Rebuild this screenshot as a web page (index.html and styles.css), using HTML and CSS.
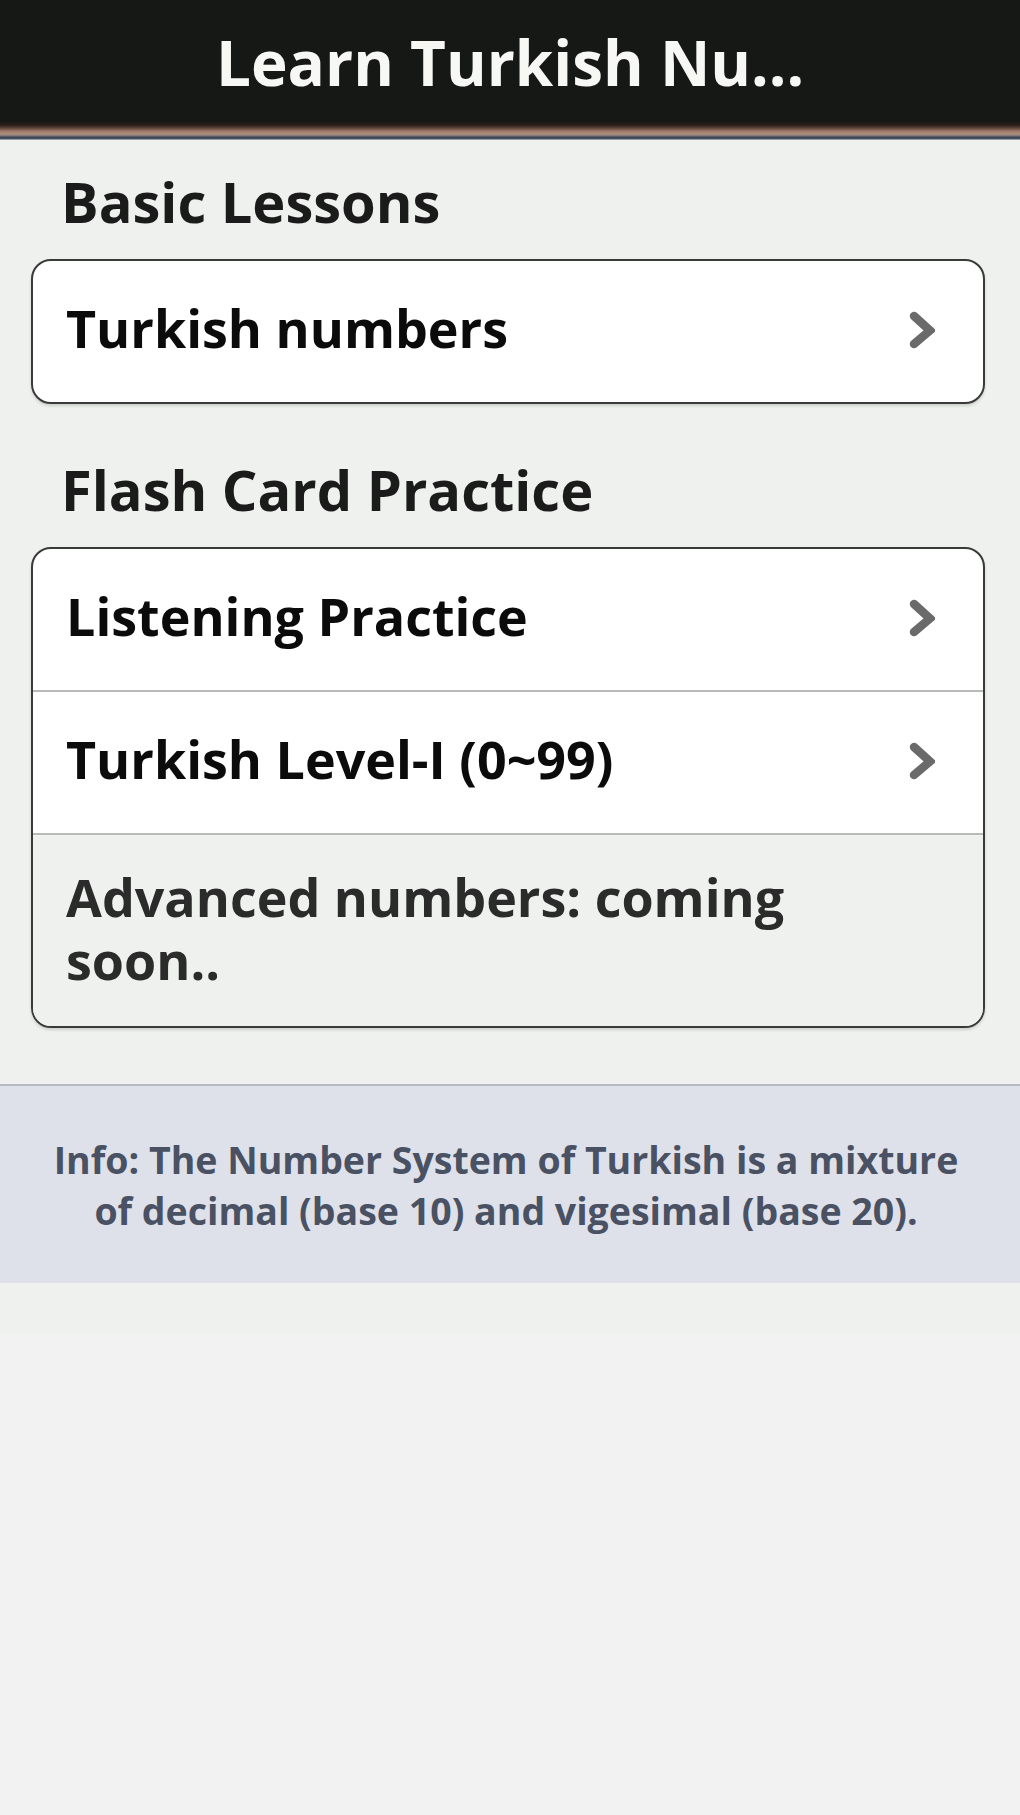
FILE: index.html
```html
<!DOCTYPE html>
<html lang="en">
<head>
<meta charset="utf-8">
<title>Learn Turkish Numbers</title>
<link rel="stylesheet" href="styles.css">
</head>
<body>
<div class="screen">
  <header class="appbar">Learn Turkish Nu...</header>
  <div class="appbar-edge"></div>

  <section class="section">
    <h2 class="section-title">Basic Lessons</h2>
    <div class="card">
      <div class="row">
        <span class="label">Turkish numbers</span>
        <svg class="chev" viewBox="0 0 26 38" width="26" height="38" aria-hidden="true"><polyline points="5,5 21,19.5 5,33"/></svg>
      </div>
    </div>
  </section>

  <section class="section">
    <h2 class="section-title">Flash Card Practice</h2>
    <div class="card">
      <div class="row">
        <span class="label">Listening Practice</span>
        <svg class="chev" viewBox="0 0 26 38" width="26" height="38" aria-hidden="true"><polyline points="5,5 21,19.5 5,33"/></svg>
      </div>
      <div class="row">
        <span class="label">Turkish Level-I (0~99)</span>
        <svg class="chev" viewBox="0 0 26 38" width="26" height="38" aria-hidden="true"><polyline points="5,5 21,19.5 5,33"/></svg>
      </div>
      <div class="row row-static">
        <span class="label">Advanced numbers: coming soon..</span>
      </div>
    </div>
  </section>

  <div class="info">Info: The Number System of Turkish is a mixture of decimal (base 10) and vigesimal (base 20).</div>
</div>
</body>
</html>
```

FILE: styles.css
```css
html, body {
  margin: 0;
  padding: 0;
}

body {
  background: #f2f2f2;
  font-family: "Open Sans", "Noto Sans", "DejaVu Sans", sans-serif;
  font-weight: 700;
}

.screen {
  background: #eef1ee;
  padding-bottom: 51px;
}

.appbar {
  height: 122px;
  background: #161816;
  color: #f7f7f4;
  font-size: 62px;
  line-height: 122px;
  padding-top: 1px;
  box-sizing: border-box;
  text-align: center;
  white-space: nowrap;
  overflow: hidden;
}

.appbar-edge {
  height: 18px;
  background: linear-gradient(to bottom,
    #1d1a17 0px,
    #2a1e19 3px,
    #5a4238 6px,
    #9c7868 9px,
    #b08e7e 12px,
    #7a7378 14px,
    #3b4352 15px,
    #4a5263 17px,
    #dfe3e3 18px);
}

.section {
  padding-top: 47px;
}

.section:first-of-type {
  padding-top: 23px;
}

.section-title {
  margin: 0 0 20px;
  padding-left: 61px;
  font-size: 56px;
  line-height: 76px;
  font-weight: 700;
  color: #1b1b1b;
}

.card {
  margin-left: 31px;
  width: 954px;
  box-sizing: border-box;
  border: 2px solid #3a3a3a;
  border-radius: 20px;
  background: #ffffff;
  overflow: hidden;
  box-shadow: 0 2px 3px rgba(0, 0, 0, 0.14);
}

.row {
  display: flex;
  align-items: center;
  height: 141px;
  box-sizing: border-box;
  padding: 31px 48px 38px 33px;
  font-size: 52px;
  line-height: 72px;
  color: #0b0b0b;
}

.row + .row {
  border-top: 2px solid #b9b9b9;
  height: 143px;
}

.label {
  flex: 1;
}

.chev {
  flex: none;
  margin-top: 4px;
}

.chev polyline {
  fill: none;
  stroke: #6a6a6a;
  stroke-width: 8.5;
  stroke-linecap: round;
  stroke-linejoin: miter;
}

.row-static {
  height: auto;
  background: #eef1ee;
  color: #2b2b2b;
  line-height: 63px;
  padding: 30px 150px 35px 33px;
}

.row + .row-static {
  height: auto;
}

.info {
  margin-top: 56px;
  border-top: 2px solid #b6bac3;
  background: #dfe1ea;
  color: #4a5162;
  font-size: 37.5px;
  line-height: 51px;
  text-align: center;
  padding: 48px 49px 47px 41px;
}
```
